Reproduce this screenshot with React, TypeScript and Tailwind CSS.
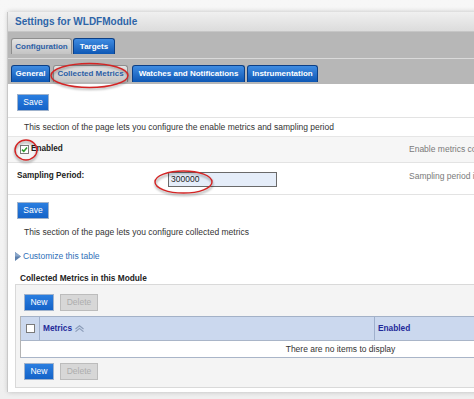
import React from "react";

const blueTab =
  "h-full rounded-t-[3px] border border-b-0 border-[#0b3f86] bg-linear-to-b from-[#3f8ce2] to-[#0c57b4] text-white font-bold text-[8px] flex items-center justify-center";
const grayTab =
  "h-full rounded-t-[3px] border border-b-0 border-[#8e8e8e] bg-linear-to-b from-[#e2e2e2] to-[#c4c4c4] text-[#2c5fa6] font-bold text-[8px] flex items-center justify-center";
const blueBtn =
  "h-[17px] border border-[#9fb2cc] bg-linear-to-b from-[#2a7ee0] to-[#1463c8] text-white text-[8.5px] flex items-center justify-center";
const grayBtn =
  "h-[17px] border border-[#bcbcbc] bg-[#d7d7d7] text-[#adadad] text-[8.5px] flex items-center justify-center";

function Check({ checked }: { checked?: boolean }) {
  return (
    <div className="w-[9px] h-[9px] border border-[#7a7a7a] bg-white flex items-center justify-center shrink-0">
      {checked && (
        <svg width="7" height="7" viewBox="0 0 7 7">
          <path d="M1 3.6 L2.8 5.4 L6 1.4" fill="none" stroke="#2b9a2b" strokeWidth="1.6" />
        </svg>
      )}
    </div>
  );
}

export default function App() {
  return (
    <div className="relative w-[474px] h-[399px] overflow-hidden bg-linear-to-b from-[#f7f7f7] to-[#efefef] pt-[12px] pl-[8px] font-['Liberation_Sans',Arial,sans-serif] text-[#333]">
      <div className="w-[700px] h-[380px] bg-white shadow-[-1px_0_0_#c8c8c8,0_0_5px_rgba(0,0,0,0.22)]">
        {/* title */}
        <div className="h-[20px] bg-linear-to-b from-[#f0f0f0] to-[#dcdcdc] border-b border-[#c6c6c6] pl-[7px] flex items-center text-[10px] font-bold text-[#2e65a8]">
          Settings for WLDFModule
        </div>
        {/* tab band 1 */}
        <div className="h-[26px] bg-[#b7b7b7] pt-[6px] pb-[4px] pl-[3px] flex">
          <div className={grayTab + " w-[61px]"}>Configuration</div>
          <div className={blueTab + " w-[42px] ml-[1px]"}>Targets</div>
        </div>
        <div className="h-[1px] bg-[#dadada]" />
        {/* tab band 2 */}
        <div className="h-[25px] bg-[#b7b7b7] pt-[6px] pb-[2px] pl-[3px] flex">
          <div className={blueTab + " w-[39px]"}>General</div>
          <div className={grayTab + " w-[75px] ml-[3px]"}>Collected Metrics</div>
          <div className={blueTab + " w-[113px] ml-[4px]"}>Watches and Notifications</div>
          <div className={blueTab + " w-[71px] ml-[2px]"}>Instrumentation</div>
        </div>

        {/* content */}
        <div className="pl-[9px] pt-[10px]">
          <div className={blueBtn + " w-[32px]"}>Save</div>
        </div>
        <div className="mt-[6px] border-t border-[#e3e3e3] h-[19px] pl-[16px] flex items-center text-[8.5px]">
          This section of the page lets you configure the enable metrics and sampling period
        </div>
        <div className="h-[26px] border-t border-[#e6e6e6] bg-[#f6f6f6] pl-[12px] flex items-center">
          <div className="w-[389px] flex items-center gap-[2px]">
            <Check checked />
            <span className="text-[8.2px] font-bold text-[#222]">Enabled</span>
          </div>
          <span className="text-[8.5px] text-[#7a7a7a] whitespace-nowrap">Enable metrics collection</span>
        </div>
        <div className="h-[33px] border-t border-b border-[#e3e3e3] pl-[9px] pt-[8px] flex items-start">
          <div className="w-[151px] text-[8.2px] font-bold text-[#222] leading-[10px]">Sampling Period:</div>
          <div className="w-[109px] h-[15px] mt-[1px] border border-[#6a6a6a] bg-[#e5edf9] text-[8.5px] text-[#222] pl-[2px] flex items-center">
            300000
          </div>
          <div className="w-[132px]" />
          <span className="text-[8.5px] text-[#7a7a7a] leading-[10px] whitespace-nowrap">Sampling period in milliseconds</span>
        </div>
        <div className="pl-[9px] pt-[7px]">
          <div className={blueBtn + " w-[32px]"}>Save</div>
        </div>
        <div className="mt-[7px] h-[12px] leading-[12px] pl-[16px] text-[8.5px]">
          This section of the page lets you configure collected metrics
        </div>
        <div className="mt-[12px] h-[12px] pl-[7px] flex items-center gap-[2px] text-[8.5px] text-[#2f6fb8]">
          <svg width="6" height="9" viewBox="0 0 6 9">
            <polygon points="0,0 6,4.5 0,9" fill="#5d80ad" />
            <polygon points="0,0 6,4.5 0,4.5" fill="#8aa6c9" />
          </svg>
          <span>Customize this table</span>
        </div>
        <div className="mt-[10px] h-[12px] leading-[12px] pl-[12px] text-[8.3px] font-bold text-[#222]">
          Collected Metrics in this Module
        </div>

        {/* table panel */}
        <div className="ml-[7px] h-[104px] border border-[#d9d9d9] bg-[#f4f4f4] pt-[9px]">
          <div className="pl-[8px] flex gap-[6px]">
            <div className={blueBtn + " w-[30px]"}>New</div>
            <div className={grayBtn + " w-[38px]"}>Delete</div>
          </div>
          <div className="mt-[5px] ml-[4px] w-[640px] border-l border-[#b3b3b3]">
            <div className="h-[24px] bg-[#cbd8ee] border-t border-[#a3b1c7] flex">
              <div className="w-[19px] border-r border-[#9fb0cc] flex items-center justify-center">
                <Check />
              </div>
              <div className="w-[335px] border-r border-[#9fb0cc] pl-[3px] flex items-center gap-[3px] text-[8.3px] font-bold text-[#1f2a99]">
                <span>Metrics</span>
                <svg width="9" height="7" viewBox="0 0 9 7">
                  <polyline points="0.5,4 4.5,0.8 8.5,4" fill="none" stroke="#8b9cb8" strokeWidth="1.2" />
                  <polyline points="0.5,6.6 4.5,3.4 8.5,6.6" fill="none" stroke="#8b9cb8" strokeWidth="1.2" />
                </svg>
              </div>
              <div className="flex-1 pl-[3px] flex items-center text-[8.3px] font-bold text-[#1f2a99]">Enabled</div>
            </div>
            <div className="h-[18px] bg-white border-t border-b border-[#a9b5c8] flex items-center justify-center text-[8.5px] text-[#333]">
              There are no items to display
            </div>
          </div>
          <div className="mt-[5px] pl-[8px] flex gap-[6px]">
            <div className={blueBtn + " w-[30px]"}>New</div>
            <div className={grayBtn + " w-[38px]"}>Delete</div>
          </div>
        </div>
      </div>

      {/* red annotation ellipses */}
      <svg className="absolute left-0 top-0 pointer-events-none" width="474" height="399">
        <defs>
          <filter id="blur" x="-20%" y="-20%" width="140%" height="140%">
            <feGaussianBlur stdDeviation="1.2" />
          </filter>
        </defs>
        <g fill="none" stroke="rgba(0,0,0,0.28)" strokeWidth="2" filter="url(#blur)">
          <ellipse cx="90" cy="77" rx="38.5" ry="12" />
          <ellipse cx="26" cy="152" rx="11" ry="10" />
          <ellipse cx="184" cy="184" rx="28.5" ry="11" />
        </g>
        <g fill="none" stroke="#d42424" strokeWidth="1.4">
          <ellipse cx="89.5" cy="75.5" rx="38.5" ry="12" />
          <ellipse cx="26" cy="150" rx="11" ry="10" />
          <ellipse cx="183.5" cy="182" rx="28.5" ry="11" />
        </g>
      </svg>
    </div>
  );
}
